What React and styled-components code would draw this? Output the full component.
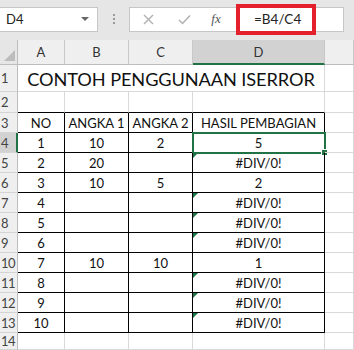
import React from "react";
import styled, { createGlobalStyle, css } from "styled-components";

const GlobalStyle = createGlobalStyle`
  html, body { margin: 0; padding: 0; background: #ffffff; }
  body { font-family: Lato, "Open Sans", sans-serif; overflow: hidden; }
`;

const GREEN = "#217346";
const GRID = "#d9d9d9";

// styled-components
const Sheet = styled.div`
  width: 354px;
  height: 350px;
  display: flex;
  flex-direction: column;
  background: #fff;
  overflow: hidden;
`;

const Toolbar = styled.div`
  position: relative;
  height: 40px;
  flex: none;
  background: #e6e6e6;
  display: flex;
  align-items: center;
  padding-bottom: 2px;
  box-sizing: border-box;
`;

const NameBox = styled.div`
  width: 99px;
  height: 25px;
  margin-left: -1px;
  box-sizing: border-box;
  background: #fff;
  border: 1px solid #c6c6c6;
  display: flex;
  align-items: center;
  justify-content: space-between;
  padding: 0 6px 0 6px;
  font-size: 13px;
  color: #222;
`;

const Caret = styled.span`
  width: 0;
  height: 0;
  border-left: 4px solid transparent;
  border-right: 4px solid transparent;
  border-top: 4px solid #666;
  margin-right: 2px;
`;

const Dots = styled.div`
  width: 31px;
  display: flex;
  flex-direction: column;
  align-items: center;
  gap: 2px;
  span {
    width: 2px;
    height: 2px;
    background: #9a9a9a;
  }
`;

const FormulaBox = styled.div`
  width: 215px;
  height: 25px;
  box-sizing: border-box;
  background: #fff;
  border: 1px solid #c6c6c6;
  display: flex;
  align-items: center;
`;

const IconSlot = styled.div`
  width: ${(p) => p.$w}px;
  display: flex;
  justify-content: center;
  align-items: center;
  color: #b5b5b5;
`;

const Fx = styled.span`
  font-family: "Liberation Serif", serif;
  font-style: italic;
  font-size: 13px;
  color: #555;
`;

const Divider = styled.div`
  width: 1px;
  height: 19px;
  background: #d0d0d0;
  margin: 0 15px 0 8px;
`;

const FormulaText = styled.div`
  font-size: 13.5px;
  color: #222;
`;

const Highlight = styled.div`
  position: absolute;
  left: 236px;
  top: 4px;
  width: 80px;
  height: 31px;
  box-sizing: border-box;
  border: 4px solid #e3202b;
`;

const Grid = styled.div`
  display: grid;
  grid-template-columns: 18px 47px 64px 64px 132px 1fr;
  grid-template-rows: 25px 27px 21px repeat(11, 20px) 1fr;
  flex: 1;
  font-size: 13px;
  color: #111;
`;

const Corner = styled.div`
  position: relative;
  background: #e6e6e6;
  border-right: 1px solid #bdbdbd;
  border-bottom: 1px solid #bdbdbd;
  box-sizing: border-box;
  &::after {
    content: "";
    position: absolute;
    right: 2px;
    bottom: 3px;
    width: 0;
    height: 0;
    border-left: 11px solid transparent;
    border-bottom: 11px solid #bcbcbc;
  }
`;

const ColHead = styled.div`
  box-sizing: border-box;
  background: ${(p) => (p.$active ? "#d2d2d2" : "#efefef")};
  border-right: 1px solid #c8c8c8;
  border-bottom: ${(p) => (p.$active ? `2px solid ${GREEN}` : "1px solid #bdbdbd")};
  display: flex;
  align-items: center;
  justify-content: center;
  font-size: 13px;
  color: #333;
  padding-top: ${(p) => (p.$active ? "1px" : "0")};
`;

const RowHead = styled.div`
  box-sizing: border-box;
  background: ${(p) => (p.$active ? "#d2d2d2" : "#efefef")};
  border-right: ${(p) => (p.$active ? `2px solid ${GREEN}` : "1px solid #bdbdbd")};
  border-bottom: 1px solid #d4d4d4;
  display: flex;
  align-items: center;
  padding-left: 1px;
  font-size: 13px;
  color: #444;
  letter-spacing: -0.5px;
`;

const Cell = styled.div`
  position: relative;
  box-sizing: border-box;
  border-right: 1px solid ${(p) => (p.$boxR ? "#000" : GRID)};
  border-bottom: 1px solid ${(p) => (p.$boxB ? "#000" : GRID)};
  display: flex;
  align-items: center;
  justify-content: center;
  white-space: nowrap;
  padding-top: 1px;
  ${(p) =>
    p.$span &&
    css`
      grid-column: span ${p.$span};
    `}
  ${(p) =>
    p.$title &&
    css`
      font-size: 18.2px;
      letter-spacing: -0.1px;
      padding-top: 2px;
    `}
  ${(p) =>
    p.$error &&
    css`
      &::before {
        content: "";
        position: absolute;
        left: 0;
        top: 0;
        width: 0;
        height: 0;
        border-right: 5px solid transparent;
        border-top: 5px solid ${GREEN};
      }
    `}
`;

const Selection = styled.div`
  position: absolute;
  left: -1px;
  top: -1px;
  right: -2px;
  bottom: -2px;
  border: 2px solid ${GREEN};
  pointer-events: none;
  &::after {
    content: "";
    position: absolute;
    right: -4px;
    bottom: -4px;
    width: 5px;
    height: 5px;
    background: ${GREEN};
    border: 1px solid #fff;
  }
`;

const rows = [
  ["1", "10", "2", "5"],
  ["2", "20", "", "#DIV/0!"],
  ["3", "10", "5", "2"],
  ["4", "", "", "#DIV/0!"],
  ["5", "", "", "#DIV/0!"],
  ["6", "", "", "#DIV/0!"],
  ["7", "10", "10", "1"],
  ["8", "", "", "#DIV/0!"],
  ["9", "", "", "#DIV/0!"],
  ["10", "", "", "#DIV/0!"],
];

const cols = ["A", "B", "C", "D", ""];

export default function App() {
  return (
    <>
      <GlobalStyle />
      <Sheet>
        <Toolbar>
          <NameBox>
            D4
            <Caret />
          </NameBox>
          <Dots>
            <span />
            <span />
            <span />
          </Dots>
          <FormulaBox>
            <IconSlot $w={36}>
              <svg width="11" height="11" viewBox="0 0 11 11">
                <path d="M1 1 L10 10 M10 1 L1 10" stroke="#b0b0b0" strokeWidth="1.4" />
              </svg>
            </IconSlot>
            <IconSlot $w={36}>
              <svg width="13" height="11" viewBox="0 0 13 11">
                <path d="M1 6 L4.5 9.5 L12 1.5" stroke="#b0b0b0" strokeWidth="1.5" fill="none" />
              </svg>
            </IconSlot>
            <IconSlot $w={28}>
              <Fx>fx</Fx>
            </IconSlot>
            <Divider />
            <FormulaText>=B4/C4</FormulaText>
          </FormulaBox>
          <Highlight />
        </Toolbar>

        <Grid>
          <Corner />
          {cols.map((c, i) => (
            <ColHead key={i} $active={c === "D"}>
              {c}
            </ColHead>
          ))}

          <RowHead>1</RowHead>
          <Cell $span={4} $title>
            CONTOH PENGGUNAAN ISERROR
          </Cell>
          <Cell />

          <RowHead>2</RowHead>
          <Cell $boxB />
          <Cell $boxB />
          <Cell $boxB />
          <Cell $boxB />
          <Cell />

          <RowHead>3</RowHead>
          <Cell $boxR $boxB>NO</Cell>
          <Cell $boxR $boxB>ANGKA 1</Cell>
          <Cell $boxR $boxB>ANGKA 2</Cell>
          <Cell $boxR $boxB>HASIL PEMBAGIAN</Cell>
          <Cell />

          {rows.map((r, i) => (
            <React.Fragment key={i}>
              <RowHead $active={i === 0}>{i + 4}</RowHead>
              <Cell $boxR $boxB>{r[0]}</Cell>
              <Cell $boxR $boxB>{r[1]}</Cell>
              <Cell $boxR $boxB>{r[2]}</Cell>
              <Cell $boxR $boxB $error={r[3] === "#DIV/0!"}>
                {r[3]}
                {i === 0 && <Selection />}
              </Cell>
              <Cell />
            </React.Fragment>
          ))}

          <RowHead>14</RowHead>
          <Cell />
          <Cell />
          <Cell />
          <Cell />
          <Cell />
        </Grid>
      </Sheet>
    </>
  );
}
